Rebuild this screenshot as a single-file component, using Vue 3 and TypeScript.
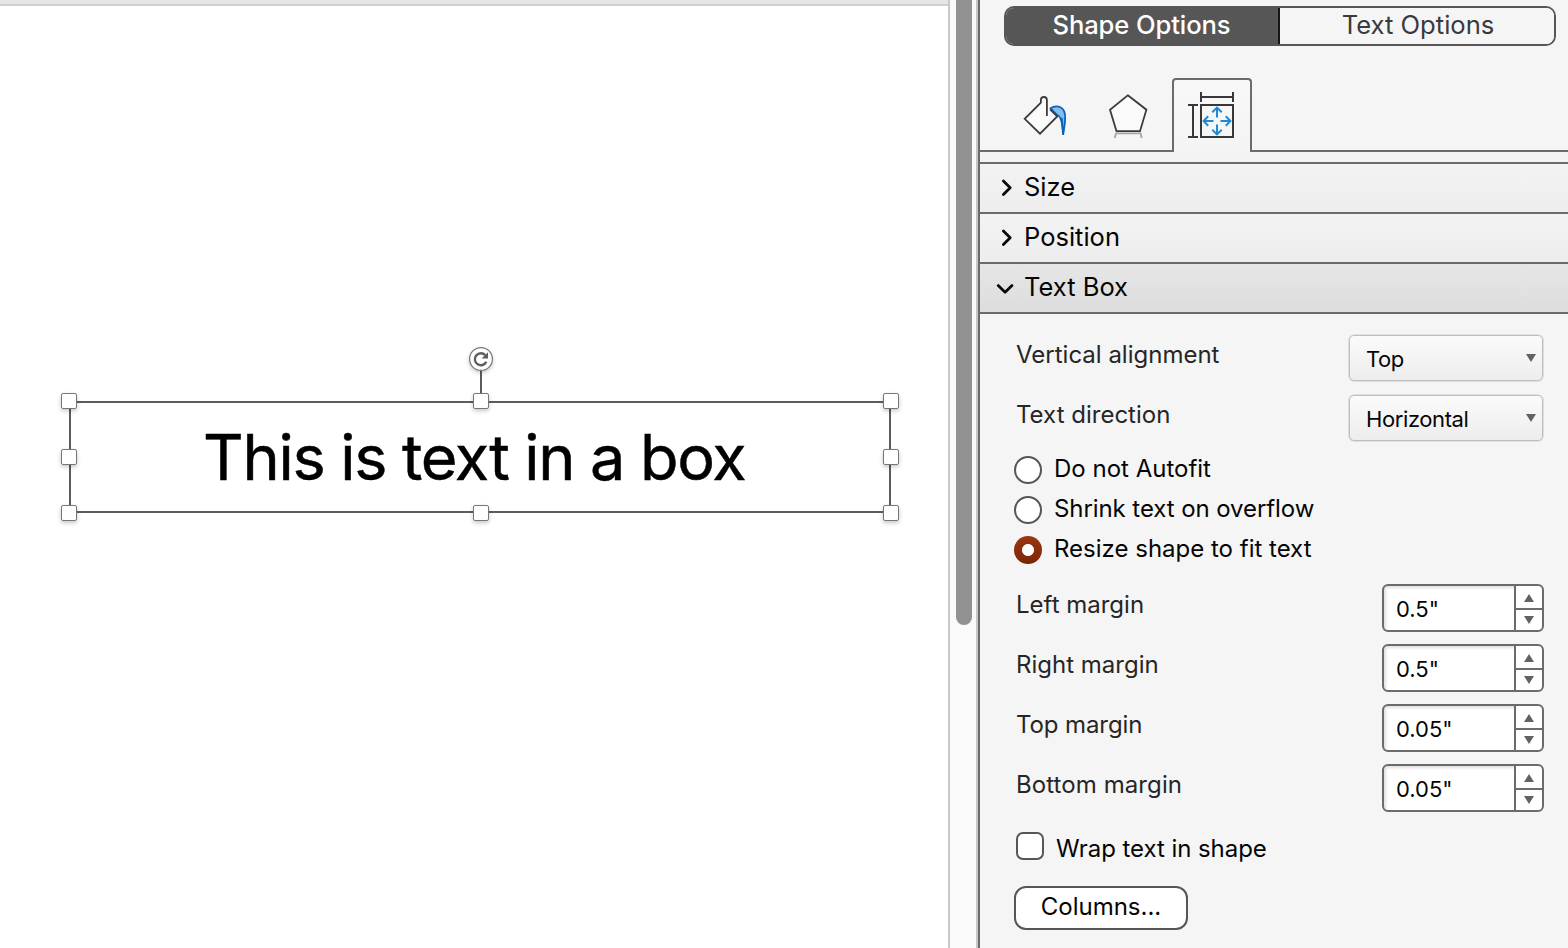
<script setup lang="ts">
import { ref } from 'vue'

interface Section { title: string; open: boolean }
interface Choice { label: string; cls: string }
interface Margin { label: string; value: string; cls: string }

const sections = ref<Section[]>([
  { title: 'Size', open: false },
  { title: 'Position', open: false },
  { title: 'Text Box', open: true },
])
const selects = [
  { label: 'Vertical alignment', value: 'Top' },
  { label: 'Text direction', value: 'Horizontal' },
]
const fits: Choice[] = [
  { label: 'Do not Autofit', cls: 'r-none' },
  { label: 'Shrink text on overflow', cls: 'r-shrink' },
  { label: 'Resize shape to fit text', cls: 'r-resize' },
]
const fit = ref(2)
const margins: Margin[] = [
  { label: 'Left margin', value: '0.5"', cls: 'l-left' },
  { label: 'Right margin', value: '0.5"', cls: 'l-right' },
  { label: 'Top margin', value: '0.05"', cls: 'l-top' },
  { label: 'Bottom margin', value: '0.05"', cls: 'l-bottom' },
]
const handles = ['tl', 'tc', 'tr', 'ml', 'mr', 'bl', 'bc', 'br']
</script>

<template>
  <div class="app">
    <main class="canvas">
      <div class="slide-top"></div>
      <div class="shape">
        <span class="shape-text">This is text in a box</span>
        <i class="stem"></i>
        <svg class="rotate" width="36" height="36" viewBox="0 0 36 36">
          <circle cx="18" cy="18" r="11.4" fill="#fff" stroke="#777" stroke-width="1.2" />
          <path d="M22.3 14.2A6 6 0 1 0 23.3 20.8" fill="none" stroke="#5f5f5f" stroke-width="2.4" />
          <path d="M25 11.2V17.6H18.6Z" fill="#5f5f5f" />
        </svg>
        <i v-for="h in handles" :key="h" class="handle" :class="h"></i>
      </div>
    </main>
    <div class="scroll"><div class="thumb"></div></div>
    <aside class="panel">
      <div class="segments">
        <button class="seg on"><span>Shape Options</span></button>
        <button class="seg"><span>Text Options</span></button>
      </div>
      <nav class="tabs">
        <div class="lead">
          <svg width="192" height="72" viewBox="980 78 192 72" fill="none">
            <path d="M1046.7 106L1057.2 116.4L1040 133.7L1024.7 118.8L1040.9 102.6V100A3 3 0 0 1 1046.7 100Z" fill="#fbfbfb" />
            <path d="M1050.6 108.3C1055.5 104.8 1062 106.2 1064.3 111.6C1066.6 117.5 1064.6 124.5 1063.2 134.5C1062.6 126 1061.5 115.5 1057.2 115.2Z" fill="#83bdec" stroke="#0b63b5" stroke-width="1.8" />
            <path d="M1063.1 135C1062.4 128 1062.6 122 1061.6 118" stroke="#0b63b5" stroke-width="1.8" />
            <path d="M1050 109.4L1057.2 116.4L1040 133.7L1024.7 118.8L1040.9 102.6V100A3 3 0 0 1 1046.9 100V116" stroke="#3b3b3b" stroke-width="1.8" />
            <path d="M1127.8 95.3L1146.4 109.7L1140 131.2H1116.5L1110 109.7Z" fill="#fafafa" stroke="#3b3b3b" stroke-width="1.8" />
            <path d="M1114.8 138L1116 133.3H1140.6L1141.6 138" stroke="#a6a6a6" stroke-width="1.8" />
          </svg>
        </div>
        <div class="tab">
          <svg width="76" height="72" viewBox="1174 80 76 72" fill="none">
            <path d="M1201 92V102M1233 92V102M1201 97H1233M1188 105H1198M1188 137H1198M1193 105V137M1201 105H1233V137H1201Z" stroke="#383838" stroke-width="2" />
            <path d="M1217 117.5V108M1212.3 112.2L1217 107.6L1221.7 112.2M1217 124.5V134M1212.3 129.8L1217 134.4L1221.7 129.8M1213.5 121H1204M1208.2 116.3L1203.6 121L1208.2 125.7M1220.5 121H1230M1225.8 116.3L1230.4 121L1225.8 125.7" stroke="#1c8ad4" stroke-width="2" />
          </svg>
        </div>
        <div class="rest"></div>
      </nav>
      <div class="gap"></div>
      <div v-for="s in sections" :key="s.title" class="section" :class="{ open: s.open }">
        <svg width="24" height="24" viewBox="0 0 24 24" fill="none" stroke="#0a0a0a" stroke-width="2.8" stroke-linecap="round" stroke-linejoin="round">
          <path v-if="s.open" d="M4.2 9.6L11.1 16.2L18 9.6" />
          <path v-else d="M9.4 5L16.2 11.7L9.4 18.4" />
        </svg>
        <span>{{ s.title }}</span>
      </div>
      <div class="body">
        <div class="rows">
          <div v-for="s in selects" :key="s.label" class="row">
            <span class="label">{{ s.label }}</span>
            <div class="select">
              <span>{{ s.value }}</span>
              <svg width="10" height="8" viewBox="0 0 10 8"><path d="M0 0H10L5 8Z" fill="#626262" /></svg>
            </div>
          </div>
        </div>
        <div class="radios">
          <div v-for="(f, i) in fits" :key="f.label" class="radio" @click="fit = i">
            <i :class="{ checked: fit === i }"></i>
            <span :class="f.cls">{{ f.label }}</span>
          </div>
        </div>
        <div class="rows">
          <div v-for="m in margins" :key="m.label" class="row">
            <span class="label" :class="m.cls">{{ m.label }}</span>
            <div class="spinner">
              <span>{{ m.value }}</span>
              <div class="steps">
                <div><svg width="10" height="8" viewBox="0 0 10 8"><path d="M0 8H10L5 0Z" fill="#626262" /></svg></div>
                <div><svg width="10" height="8" viewBox="0 0 10 8"><path d="M0 0H10L5 8Z" fill="#626262" /></svg></div>
              </div>
            </div>
          </div>
        </div>
        <div class="check"><i></i><span>Wrap text in shape</span></div>
        <button class="columns"><span>Columns...</span></button>
      </div>
    </aside>
  </div>
</template>

<style>
html, body { margin: 0; overflow: hidden; background: #f5f5f5; }
</style>

<style scoped>
* { box-sizing: border-box; }
.app { display: flex; width: 1568px; height: 948px; overflow: hidden; background: #f5f5f5; color: #050505; font-family: Inter, "Liberation Sans", sans-serif; white-space: nowrap; }
button { appearance: none; margin: 0; padding: 0; font: inherit; color: inherit; }
svg { display: block; flex: none; }

.canvas { width: 950px; background: #fff; border-right: 2px solid #c8c8c8; }
.slide-top { height: 6px; background: #e6e6e6; border-bottom: 2px solid #d0d0d0; }
.shape { position: relative; width: 822px; height: 112px; margin: 395px 0 0 69px; border: 2px solid #5c5c5c; display: flex; align-items: center; }
.shape-text { margin: -1px 0 0 132px; font-size: 63px; line-height: 76px; letter-spacing: -1.25px; word-spacing: -0.7px; color: #000; -webkit-text-stroke: 0.5px #000; }
.stem { position: absolute; left: 409px; top: -32px; width: 2px; height: 26px; background: #5c5c5c; }
.rotate { position: absolute; left: 392px; top: -62px; filter: drop-shadow(0 2px 2px rgba(0, 0, 0, .2)); }
.handle { position: absolute; width: 16px; height: 16px; background: #fff; border: 1px solid #777; border-radius: 2px; box-shadow: 0 2px 4px rgba(0, 0, 0, .22); }
.tl, .tc, .tr { top: -10px; }
.ml, .mr { top: 46px; }
.bl, .bc, .br { top: 102px; }
.tl, .ml, .bl { left: -10px; }
.tc, .bc { left: 402px; }
.tr, .mr, .br { left: 812px; }

.scroll { width: 28px; background: #fafafa; border-right: 2px solid #c6c6c6; padding-left: 6px; }
.thumb { width: 16px; height: 625px; background: #919191; border-radius: 0 0 8px 8px; }

.panel { width: 590px; border-left: 2px solid #6b6b6b; background: #f5f5f5; }
.segments { display: flex; height: 40px; margin: 6px 12px 0 24px; border: 2px solid #565656; border-radius: 10px; overflow: hidden; font-size: 25.6px; line-height: 34px; color: #3a3a3a; }
.seg { flex: 1; border: 0; background: #f5f5f5; padding: 0 0 2px 2px; }
.seg.on { flex: none; width: 274px; padding: 0 1px 2px 0; background: #565656; color: #fff; border-right: 2px solid #161616; font-weight: 500; letter-spacing: -0.1px; }

.tabs { display: flex; height: 74px; margin-top: 32px; }
.lead { width: 192px; border-bottom: 2px solid #6b6b6b; }
.tab { width: 80px; border: 2px solid #6b6b6b; border-bottom: 0; border-radius: 4px 4px 0 0; background: linear-gradient(#f8f8f8, #f4f4f4); }
.rest { flex: 1; border-bottom: 2px solid #6b6b6b; }
.gap { height: 12px; border-bottom: 2px solid #6b6b6b; background: #f3f3f3; }

.section { display: flex; align-items: center; height: 50px; padding-left: 14px; border-bottom: 2px solid #6b6b6b; background: linear-gradient(#f3f3f3, #ededed); font-size: 25.5px; line-height: 30px; }
.section.open { background: linear-gradient(#e6e6e6, #dddddd); }
.section span { margin: -2px 0 0 6px; }

.body { padding: 20px 24px 0 34px; }
.rows { display: flex; flex-direction: column; gap: 12px; }
.row { display: flex; justify-content: space-between; align-items: center; height: 48px; }
.label { margin: -7px 0 0 2px; font-size: 24px; line-height: 30px; color: #262626; }
.l-top { letter-spacing: -0.1px; }
.l-bottom { letter-spacing: 0.08px; }
.select { display: flex; align-items: center; justify-content: space-between; width: 194px; height: 46px; margin-right: 1px; padding: 0 6px 0 16px; border: 1px solid #bebebe; border-radius: 5px; background: linear-gradient(#fbfbfb, #ededed); font-size: 22px; letter-spacing: -0.4px; line-height: 28px; box-shadow: 0 0 0 .6px #cfcfcf; }
.select span { margin-top: 1px; }

.radios { margin: 8px 0 14px; font-size: 24px; line-height: 30px; }
.radio { display: flex; align-items: center; height: 40px; }
.radio i { width: 28px; height: 28px; border-radius: 50%; border: 2px solid #565656; background: #fff; }
.radio i.checked { border: 0; background: radial-gradient(circle, #fff 5.6px, transparent 6.4px), linear-gradient(#9c360f, #7a2607); }
.radio span { margin: -2px 0 0 12px; }
.r-shrink { letter-spacing: -0.08px; }

.spinner { display: flex; width: 162px; height: 48px; border: 2px solid #6b6b6b; border-radius: 6px; background: #fff; overflow: hidden; font-size: 22px; }
.spinner > span { flex: 1; padding-left: 12px; line-height: 46px; box-shadow: inset 2px 2px 3px rgba(0, 0, 0, .12); }
.steps { width: 28px; border-left: 2px solid #6b6b6b; }
.steps div { height: 22px; display: flex; align-items: center; justify-content: center; padding-top: 2px; }
.steps div:last-child { border-top: 2px solid #6b6b6b; padding-top: 0; }

.check { display: flex; align-items: center; height: 28px; margin: 20px 0 0 2px; font-size: 24px; line-height: 30px; letter-spacing: -0.06px; }
.check i { width: 28px; height: 28px; border: 2px solid #565656; border-radius: 7px; background: #fff; }
.check span { margin: 5px 0 0 12px; }
.columns { display: block; width: 174px; height: 44px; margin-top: 26px; padding-bottom: 2px; border: 2px solid #565656; border-radius: 12px; background: #fff; font-size: 24px; line-height: 30px; }
</style>
